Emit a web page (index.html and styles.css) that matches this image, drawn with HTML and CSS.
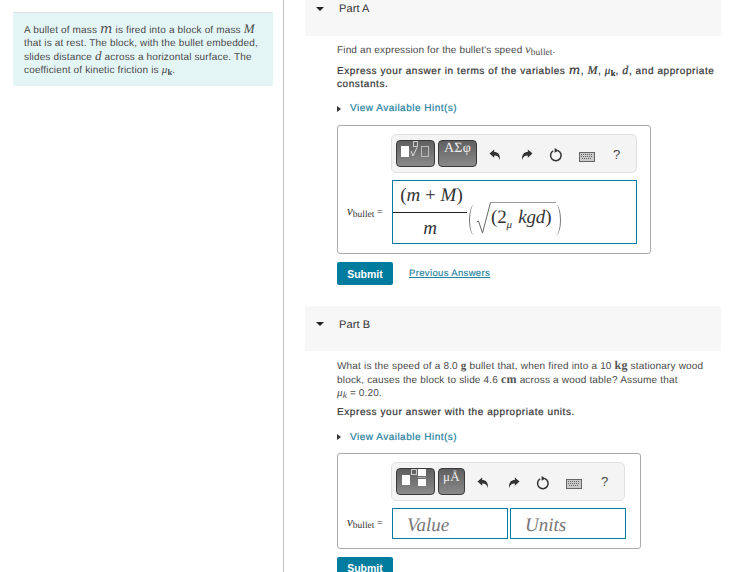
FILE: index.html
```html
<!DOCTYPE html>
<html lang="en">
<head>
<meta charset="utf-8">
<title>Bullet and block</title>
<link rel="stylesheet" href="styles.css">
</head>
<body>
<svg class="defs" width="0" height="0">
  <defs>
    <symbol id="undo" viewBox="0 0 12 12"><path d="M0.5 4.6 L5.2 0.6 V3 C8.8 3 11.4 5.2 10.9 11 C10 7.8 8.3 6.5 5.2 6.5 V8.8 Z" fill="#333"/></symbol>
    <symbol id="redo" viewBox="0 0 12 12"><path d="M11.5 4.6 L6.8 0.6 V3 C3.2 3 0.6 5.2 1.1 11 C2 7.8 3.7 6.5 6.8 6.5 V8.8 Z" fill="#333"/></symbol>
    <symbol id="reset" viewBox="0 0 14 14"><path d="M8.9 2.6 A5.3 5.3 0 1 1 4.2 2.9" fill="none" stroke="#333" stroke-width="1.5"/><path d="M5.6 0 L9.6 2.6 L5.6 4.8 Z" fill="#333"/></symbol>
    <symbol id="keys" viewBox="0 0 16 10"><rect x="0.5" y="0.5" width="15" height="9" fill="#c9c9c9" stroke="#666"/><path d="M2 2.5h12M2 4.5h12M3 6.5h10" stroke="#666" stroke-dasharray="1 1"/></symbol>
  </defs>
</svg>
<div class="page">
  <aside class="side">
    <div class="intro">
      A bullet of mass <span class="mvar big">m</span> is fired into a block of mass <span class="mi big">M</span> that is at rest. The block, with the bullet embedded, slides distance <span class="mi big">d</span> across a horizontal surface. The coefficient of kinetic friction is <span class="mi">μ</span><sub class="msub heavy">k</sub>.
    </div>
  </aside>
  <main class="main">
    <section class="part">
      <header class="part-head head-a"><span class="caret"></span><span class="part-title">Part A</span></header>
      <div class="part-body">
        <p class="txt first-a">Find an expression for the bullet's speed <span class="mi med">v</span><sub class="msub">bullet</sub>.</p>
        <p class="txt strong strong-a">Express your answer in terms of the variables <span class="mvar med">m</span>, <span class="mi med">M</span>, <span class="mi">μ</span><sub class="msub heavy">k</sub>, <span class="mi med">d</span>, and appropriate constants.</p>
        <p class="hint"><span class="hint-arrow"></span>View Available Hint(s)</p>
        <div class="answer answer-a">
          <div class="toolbar bar-a">
            <div class="tool-btn wide">
              <svg class="btn-ic" viewBox="0 0 37 25"><rect x="4" y="5" width="8" height="11" fill="#fff"/><rect x="16.5" y="0.5" width="4" height="5" fill="none" stroke="#ccc"/><path d="M14 10 L16 15 L20 6.5" fill="none" stroke="#ddd"/><rect x="24.5" y="5.5" width="7" height="10" fill="none" stroke="#bbb"/></svg>
            </div>
            <div class="tool-btn wide greek">ΑΣφ</div>
            <div class="icons">
              <svg class="ic"><use href="#undo"/></svg>
              <svg class="ic gap-a"><use href="#redo"/></svg>
              <svg class="ic-r"><use href="#reset"/></svg>
              <svg class="ic-k"><use href="#keys"/></svg>
              <span class="q gap-q">?</span>
            </div>
          </div>
          <div class="eq-row">
            <span class="eq-label"><span class="mi vv">v</span><sub class="msub">bullet</sub> <span class="eq">=</span></span>
            <div class="mathbox">
              <div class="frac">
                <div class="num">(<i>m</i> + <i>M</i>)</div>
                <div class="den"><i>m</i></div>
              </div>
              <div class="paren-group">
                <span class="paren paren-l"></span>
                <svg class="root" viewBox="0 0 15 33"><path d="M0.5 20 L2.5 19 L6.5 31 L14.5 0.5 H15" fill="none" stroke="#666"/></svg>
                <span class="radicand">(2<sub class="mu">μ</sub> <i>kgd</i>)</span>
                <span class="paren paren-r"></span>
              </div>
            </div>
          </div>
        </div>
        <div class="actions">
          <button class="submit" type="button">Submit</button>
          <a class="prev" href="#">Previous Answers</a>
        </div>
      </div>
    </section>
    <section class="part part-b">
      <header class="part-head head-b"><span class="caret"></span><span class="part-title">Part B</span></header>
      <div class="part-body">
        <p class="txt question">What is the speed of a 8.0 <span class="unit">g</span> bullet that, when fired into a 10 <span class="unit big">kg</span> stationary wood<br>block, causes the block to slide 4.6 <span class="unit big">cm</span> across a wood table? Assume that<br><span class="mi">μ</span><sub class="msub it">k</sub> = 0.20.</p>
        <p class="txt strong units-note">Express your answer with the appropriate units.</p>
        <p class="hint"><span class="hint-arrow"></span>View Available Hint(s)</p>
        <div class="answer answer-b">
          <div class="toolbar bar-b">
            <div class="tool-btn wide">
              <svg class="btn-ic" viewBox="0 0 37 25"><rect x="5" y="6" width="8" height="10" fill="#fff"/><rect x="14.5" y="0.5" width="5" height="5" fill="none" stroke="#ccc"/><rect x="21" y="0" width="8" height="7" fill="#fff"/><path d="M21 8.5h8" stroke="#aaa"/><rect x="21" y="10" width="8" height="7" fill="#fff"/></svg>
            </div>
            <div class="tool-btn narrow greek">μÅ</div>
            <div class="icons">
              <svg class="ic"><use href="#undo"/></svg>
              <svg class="ic gap-b"><use href="#redo"/></svg>
              <svg class="ic-r"><use href="#reset"/></svg>
              <svg class="ic-k"><use href="#keys"/></svg>
              <span class="q gap-qb">?</span>
            </div>
          </div>
          <div class="eq-row row-b">
            <span class="eq-label"><span class="mi vv">v</span><sub class="msub">bullet</sub> <span class="eq">=</span></span>
            <div class="field">Value</div>
            <div class="field">Units</div>
          </div>
        </div>
        <div class="actions">
          <button class="submit" type="button">Submit</button>
        </div>
      </div>
    </section>
  </main>
</div>
</body>
</html>
```
FILE: styles.css
```css
* { box-sizing: border-box; }
html, body { margin: 0; padding: 0; height: 100%; overflow: hidden; background: #fff; }
body { font-family: "Liberation Sans", Arial, sans-serif; font-size: 10px; color: #444; text-rendering: geometricPrecision; }
.defs { display: block; height: 0; }
.page { display: flex; height: 572px; overflow: hidden; }

.side { width: 284px; flex: none; border-right: 1px solid #c4c4c4; padding: 12px 10px 0 13px; }
.intro { background: #e4f5f6; border-top: 1px solid #d9e2e3; height: 74px; padding: 11px 10px 0 11px; font-size: 10px; line-height: 13.3px; color: #4a4a4a; letter-spacing: 0.16px; }

.mi, .mvar, .unit { font-family: "Liberation Serif", "DejaVu Serif", serif; }
.mi { font-style: italic; font-size: 11px; line-height: 10px; }
.mvar { font-style: italic; font-family: "DejaVu Serif", serif; }
.big { font-size: 13px; line-height: 10px; }
.med { font-size: 12px; line-height: 10px; }
.msub { font-family: "Liberation Serif", serif; font-size: 9.5px; line-height: 0; vertical-align: -2px; letter-spacing: 0; }
.msub.heavy { font-weight: bold; font-size: 8.5px; }
.msub.it { font-style: italic; }
.unit { font-size: 11px; line-height: 10px; font-weight: bold; color: #555; }
.unit.big { font-size: 12px; }

.main { width: 416px; margin-left: 21px; flex: none; }
.part-head { background: #f7f7f7; display: flex; align-items: flex-start; }
.head-a { height: 36px; }
.head-b { height: 45px; padding-top: 11px; }
.caret { width: 0; height: 0; margin: 7px 0 0 11px; border-left: 4px solid transparent; border-right: 4px solid transparent; border-top: 4px solid #222; }
.head-b .caret { margin-top: 5px; }
.part-title { margin-left: 15px; font-size: 11px; line-height: 17px; color: #333; letter-spacing: 0.1px; }
.head-a .part-title { margin-top: 1px; }
.part-body { padding-left: 32px; }

.txt { margin: 0; font-size: 10px; line-height: 13px; color: #4a4a4a; letter-spacing: 0.15px; }
.first-a { margin-top: 8px; }
.strong { margin-top: 9px; color: #333; letter-spacing: 0.58px; -webkit-text-stroke: 0.2px #333; line-height: 12.5px; }
.strong-a { margin-top: 8px; }
.hint { margin: 11px 0 0; display: flex; align-items: center; font-size: 10px; line-height: 13px; color: #1f82a0; -webkit-text-stroke: 0.2px #1f82a0; letter-spacing: 0.49px; }
.hint-arrow { width: 0; height: 0; margin-right: 9px; border-top: 3.5px solid transparent; border-bottom: 3.5px solid transparent; border-left: 4.5px solid #333; }

.answer { margin-top: 10px; border: 1px solid #aaa; border-radius: 3px; padding: 8px 12px 8px 53px; }
.answer-a { width: 314px; height: 129px; }
.answer-b { width: 304px; height: 96px; margin-top: 9px; padding-right: 13px; }
.toolbar { background: #f4f4f4; border: 1px solid #e2e2e2; border-radius: 5px; height: 39px; display: flex; align-items: flex-start; padding: 5px 0 0 4px; gap: 3px; }
.bar-a { width: 246px; }
.bar-b { width: 234px; }
.tool-btn { height: 27px; border-radius: 4px; border: 1px solid #3a3a3a; background: linear-gradient(#5f5f5f, #8a8a8a); color: #eee; display: flex; overflow: hidden; }
.wide { width: 39px; }
.narrow { width: 27px; }
.greek { font-family: "Liberation Serif", serif; font-size: 14px; justify-content: center; line-height: 15px; letter-spacing: 0.2px; }
.narrow.greek { font-size: 13px; }
.btn-ic { width: 37px; height: 25px; display: block; }
.icons { display: flex; align-items: center; height: 30px; padding-left: 9px; gap: 16px; }
.ic { width: 12px; height: 12px; flex: none; }
.ic-r { width: 14px; height: 14px; flex: none; }
.ic-k { width: 16px; height: 10px; flex: none; margin-top: 3px; }
.q { font-size: 13px; color: #444; margin-top: -2px; }
.gap-a { margin-left: 4px; }
.gap-b { margin-left: 3px; }
.gap-q { margin-left: 2px; }
.gap-qb { margin-left: 3px; }

.eq-row { display: flex; margin-top: 7px; margin-left: -53px; align-items: center; }
.eq-label { width: 54px; padding-left: 9px; flex: none; font-size: 10px; color: #333; font-family: "Liberation Serif", serif; white-space: nowrap; }
.vv { font-size: 13px; }
.eq { font-size: 10px; }
.mathbox { width: 245px; height: 64px; border: 1px solid #007c9e; display: flex; align-items: flex-start; font-family: "Liberation Serif", serif; font-size: 19px; color: #333; }
.frac { width: 74px; display: flex; flex-direction: column; align-items: center; }
.num { height: 32px; line-height: 30px; border-bottom: 1px solid #222; width: 100%; text-align: center; padding-left: 3px; font-size: 19px; white-space: nowrap; }
.den { height: 30px; line-height: 31px; }
.paren-group { display: flex; align-items: flex-start; margin-left: 2px; padding-top: 21px; }
.paren { display: block; width: 5px; height: 30px; margin-top: 3px; flex: none; }
.paren-l { border-left: 1px solid #777; border-radius: 100% 0 0 100% / 50% 0 0 50%; }
.paren-r { border-right: 1px solid #777; border-radius: 0 100% 100% 0 / 0 50% 50% 0; }
.root { width: 15px; height: 33px; margin-left: 2px; flex: none; display: block; }
.radicand { border-top: 1px solid #999; width: 65px; line-height: 29px; font-size: 19px; white-space: nowrap; color: #333; letter-spacing: -0.2px; }
.mu { font-size: 11px; line-height: 0; font-style: italic; margin-right: 2px; }

.row-b { gap: 2px; }
.row-b .eq-label { margin-right: -2px; }
.field { width: 116px; height: 31px; border: 1px solid #007c9e; font-family: "Liberation Serif", serif; font-style: italic; font-size: 19px; color: #777; line-height: 33px; padding-left: 14px; }

.actions { display: flex; align-items: flex-start; margin-top: 8px; }
.submit { width: 56px; height: 23px; border: 0; border-radius: 2px; background: #007c9e; color: #fff; font-family: "Liberation Sans", Arial, sans-serif; font-size: 10.5px; font-weight: bold; padding: 0; }
.prev { margin: 6px 0 0 16px; font-size: 9.5px; line-height: 12px; color: #1f82a0; letter-spacing: 0.35px; -webkit-text-stroke: 0.15px #1f82a0; }

.part-b { margin-top: 21px; }
.question { margin-top: 9px; line-height: 12.8px; letter-spacing: 0.18px; }
.units-note { margin-top: 7px; }
```
